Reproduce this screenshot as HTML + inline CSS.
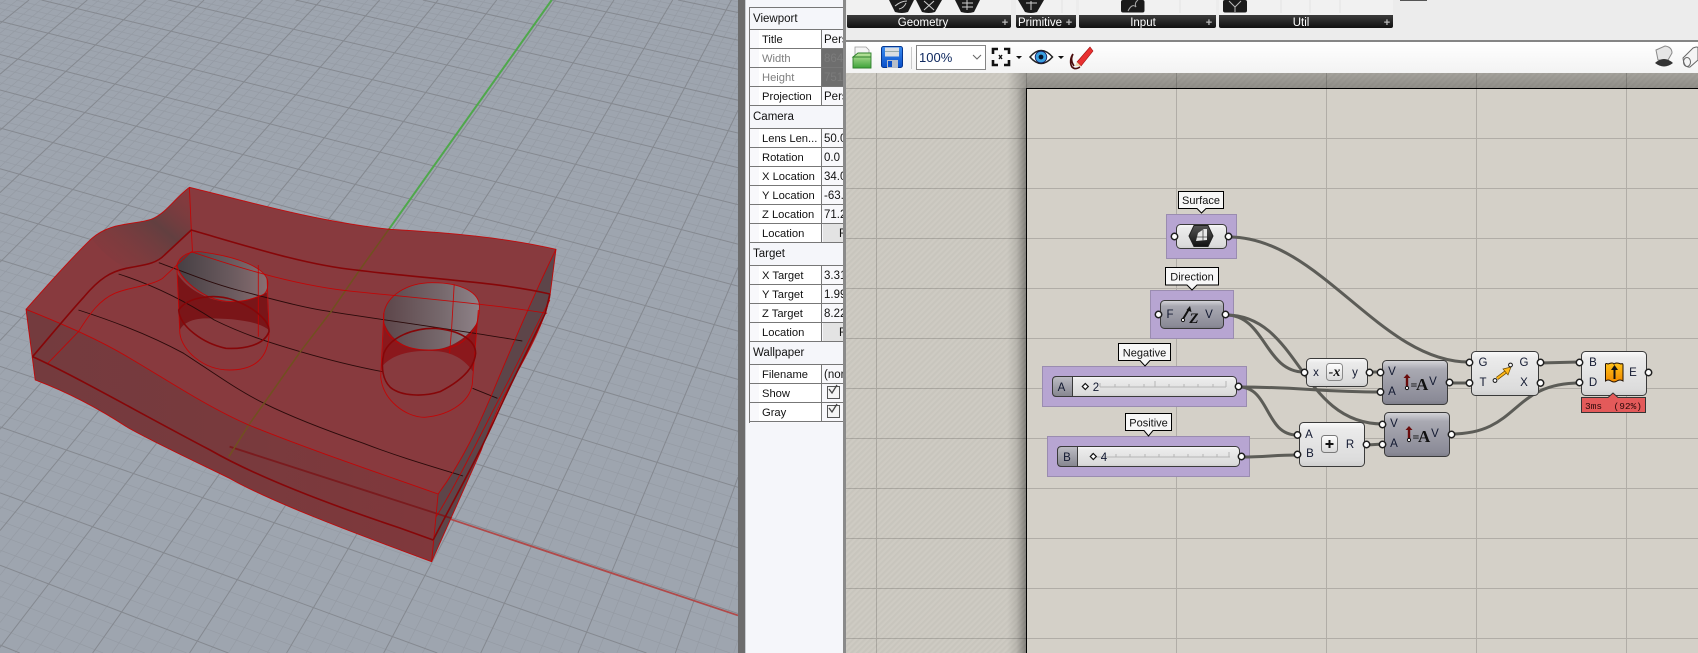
<!DOCTYPE html>
<html><head><meta charset="utf-8">
<style>
html,body{margin:0;padding:0;width:1698px;height:653px;overflow:hidden;background:#f5f6fa;font-family:"Liberation Sans",sans-serif}
svg{position:absolute;left:0;top:0}
#panel{position:absolute;left:746px;top:0;width:99px;height:653px;background:#f5f6fa;overflow:hidden}
#tbl{position:absolute;left:3px;top:7px;width:96px;height:415px;border-left:1px solid #777;border-top:1px solid #777;background:#f8f8fb;overflow:hidden}
.r{position:absolute;left:0;width:96px;box-sizing:border-box;border-bottom:1px solid #777;font-size:11.2px;line-height:20px;height:19px;color:#111;white-space:nowrap}
.r b{font-weight:normal;position:absolute;left:9px;top:0;height:18px;padding-left:3px;border-right:1px solid #777;background:#fff;width:59px;overflow:hidden}
.r i{font-style:normal;position:absolute;left:72px;top:0;padding-left:2px;width:30px;height:18px;overflow:hidden;font-size:11.5px}
.g{font-size:11.5px;line-height:22px;background:#f5f6fa;padding-left:3px}
.btn{background:#e3e3e3;left:73px!important;padding-left:16px!important;width:20px!important}
.cb{position:absolute;left:77px;top:2px;width:11px;height:11px;border:1px solid #555;background:#f4f4f4}
</style></head>
<body>
<svg width="738" height="653" viewBox="0 0 738 653">
<defs>
<linearGradient id="front" x1="0" y1="0" x2="1" y2="0"><stop offset="0" stop-color="#743b3e"/><stop offset=".5" stop-color="#783a3d"/><stop offset="1" stop-color="#80383c"/></linearGradient>
<linearGradient id="holeL" x1="0" y1="0" x2="1" y2="0"><stop offset="0" stop-color="#463f43"/><stop offset=".6" stop-color="#6a5a5e"/><stop offset="1" stop-color="#8a6f72"/></linearGradient>
<linearGradient id="holeR" x1="0" y1="0" x2="1" y2="0"><stop offset="0" stop-color="#5d464a"/><stop offset=".6" stop-color="#76686c"/><stop offset="1" stop-color="#8e8288"/></linearGradient>
<linearGradient id="slope" x1="0" y1="1" x2="1" y2="0"><stop offset="0" stop-color="#843a3e" stop-opacity="0"/><stop offset=".6" stop-color="#5e4040" stop-opacity=".9"/><stop offset="1" stop-color="#843a3e" stop-opacity=".2"/></linearGradient>
</defs>
<rect width="738" height="653" fill="#9ea5af"/>
<g id="grid"></g>
<line x1="551.7" y1="0" x2="389.6" y2="228.3" stroke="#4fa84b" stroke-width="2"/>
<line x1="451" y1="519.3" x2="738" y2="615.4" stroke="#b04a4a" stroke-width="1.8"/>
<g transform="translate(0,150) scale(.38265,.33333)" fill="none" stroke-linejoin="round">
<path fill="#883a3e" d="M68,478 C120,410 190,320 240,265 C290,215 350,225 395,208 C435,190 460,140 495,112 C650,155 830,215 1020,238 C1170,248 1320,262 1453,298 L1437,440 C1425,510 1380,610 1340,690 C1300,770 1270,860 1258,900 L1128,1235 C880,1130 700,1050 600,985 C520,940 390,870 330,830 C230,755 150,715 92,690 Z"/>
<path fill="url(#slope)" d="M240,265 C290,215 350,225 395,208 C435,190 460,140 495,112 L500,240 L430,315 C405,345 370,345 330,355 C290,330 260,300 240,265Z"/>
<path fill="url(#front)" d="M68,478 C180,530 260,570 340,625 C430,685 540,770 650,825 C800,895 980,965 1145,1032 L1128,1235 C880,1130 700,1050 600,985 C520,940 390,870 330,830 C230,755 150,715 92,690 Z"/>
<path fill="#5d4549" d="M1145,1032 C1210,930 1250,830 1290,720 C1330,610 1400,420 1453,298 L1437,440 C1425,510 1380,610 1340,690 C1300,770 1270,860 1258,900 L1128,1235 Z"/>
<!-- left hole -->
<path fill="url(#holeL)" d="M462,345 C470,315 500,298 540,308 C610,320 700,350 700,400 C700,425 690,435 680,437 C640,458 590,462 545,440 C510,420 470,385 462,345Z"/>
<path fill="#7a1518" d="M464,372 C490,420 550,455 600,456 C630,456 665,445 697,428 L703,540 C670,510 600,505 540,505 C510,505 480,515 470,540 Z"/>
<!-- right hole -->
<path fill="url(#holeR)" d="M1003,490 C1010,440 1060,398 1130,398 C1210,398 1253,430 1253,470 C1253,500 1245,525 1240,535 C1210,590 1170,600 1120,600 C1060,600 1010,570 1003,520Z"/>
<path fill="#8b181c" d="M1003,515 C1020,570 1060,600 1120,600 C1180,600 1225,560 1248,515 L1236,665 C1210,620 1170,603 1130,603 C1060,600 1020,620 998,650 Z"/>
<!-- hidden x axis -->
<path vector-effect="non-scaling-stroke" stroke="#7a1b1e" stroke-width="1.8" d="M600,890 L1180,1105"/>
<!-- black lines -->
<g stroke="#2a0a0a" stroke-width=".9">
<path vector-effect="non-scaling-stroke" d="M415,338 C480,365 540,395 620,420 C720,450 800,475 865,485 C1000,510 1200,540 1365,573"/>
<path vector-effect="non-scaling-stroke" d="M310,372 C400,405 480,450 560,510 C640,555 710,580 785,605 C860,630 930,650 1000,665"/>
<path vector-effect="non-scaling-stroke" d="M1235,715 L1300,745"/>
<path vector-effect="non-scaling-stroke" d="M205,480 C300,515 400,560 480,610 C560,670 620,720 690,760 C760,800 850,840 950,880 C1040,920 1130,950 1210,978"/>
</g>
<!-- seam -->
<path vector-effect="non-scaling-stroke" stroke="#70501f" stroke-width="1.5" d="M1018,235 L940,360 L865,485 L785,605 L690,760 L650,825 L598,920"/>
<!-- thin red -->
<g stroke="#c80000" stroke-width=".9" stroke-opacity=".9">
<path vector-effect="non-scaling-stroke" d="M68,478 C120,410 190,320 240,265 C290,215 350,225 395,208 C435,190 460,140 495,112 C650,155 830,215 1020,238 C1170,248 1320,262 1453,298 L1437,440 C1425,510 1380,610 1340,690 C1300,770 1270,860 1258,900 L1128,1235 C880,1130 700,1050 600,985 C520,940 390,870 330,830 C230,755 150,715 92,690 Z"/>
<path vector-effect="non-scaling-stroke" d="M68,478 C180,530 260,570 340,625 C430,685 540,770 650,825 C800,895 980,965 1145,1032 L1128,1235"/>
<path vector-effect="non-scaling-stroke" d="M1145,1032 C1210,930 1250,830 1290,720 C1330,610 1400,420 1453,298"/>
<path vector-effect="non-scaling-stroke" d="M125,640 L205,545 C235,490 260,450 300,430 C340,410 390,410 425,385 L500,305 C640,360 790,410 930,425 C1100,445 1300,465 1430,490"/>
<path vector-effect="non-scaling-stroke" d="M495,112 L500,240 L503,305"/>
<path vector-effect="non-scaling-stroke" d="M1140,1100 C1200,990 1270,820 1330,690 C1370,600 1400,530 1437,450"/>
<path vector-effect="non-scaling-stroke" d="M462,345 C470,315 500,298 540,308 C610,320 700,350 700,400 C700,425 690,435 680,437 C640,458 590,462 545,440 C510,420 470,385 462,345Z"/>
<path vector-effect="non-scaling-stroke" d="M462,345 L470,550 C475,600 530,660 600,660 C660,660 705,630 703,540 L698,385"/>
<path vector-effect="non-scaling-stroke" d="M675,345 L675,560"/>
<path vector-effect="non-scaling-stroke" d="M1003,490 C1010,440 1060,398 1130,398 C1210,398 1253,430 1253,470 C1253,500 1245,525 1240,535 C1210,590 1170,600 1120,600 C1060,600 1010,570 1003,520Z"/>
<path vector-effect="non-scaling-stroke" d="M1003,490 L995,680 C1000,750 1060,802 1110,802 C1180,795 1235,750 1235,690 L1250,480"/>
<path vector-effect="non-scaling-stroke" d="M1187,403 L1180,540 L1175,610"/>
</g>
<!-- thick dark red -->
<g stroke="#860608" stroke-width="1.6">
<path vector-effect="non-scaling-stroke" d="M85,620 C130,560 180,490 220,440 C260,385 290,365 330,355 C370,345 405,345 430,315 L500,240 C650,290 800,345 930,360 C1100,385 1300,395 1437,432"/>
<path vector-effect="non-scaling-stroke" d="M85,620 C200,680 350,780 549,900 C640,960 800,1040 1045,1134 L1132,1170"/>
<path vector-effect="non-scaling-stroke" d="M1437,432 L1425,490 C1400,550 1340,690 1300,790 C1250,920 1190,1040 1132,1170"/>
<path vector-effect="non-scaling-stroke" d="M467,480 C490,440 560,430 610,450 C660,470 705,510 703,545 C690,585 640,598 590,595 C530,580 470,530 467,480Z"/>
<path vector-effect="non-scaling-stroke" d="M1003,610 C1020,560 1080,535 1135,535 C1200,540 1243,570 1243,610 C1240,650 1210,690 1150,725 C1110,740 1050,740 1020,712 C1000,690 995,650 1003,610Z"/>
</g>
</g>
</svg>

<div style="position:absolute;left:738px;top:0;width:7px;height:653px;background:#6d6d6d"></div>
<div style="position:absolute;left:745px;top:0;width:1px;height:653px;background:#c8ccd0"></div>

<div id="panel">
<div id="tbl">
<div class="r g" style="top:0;height:22px">Viewport</div>
<div class="r" style="top:22px"><b>Title</b><i>Perspective</i></div>
<div class="r" style="top:41px"><b style="color:#7f7f7f">Width</b><i style="background:#6e6e6e;color:#7c7c7c">864</i></div>
<div class="r" style="top:60px"><b style="color:#7f7f7f">Height</b><i style="background:#6e6e6e;color:#7c7c7c">751</i></div>
<div class="r" style="top:79px"><b>Projection</b><i>Perspective</i></div>
<div class="r g" style="top:98px;height:23px">Camera</div>
<div class="r" style="top:121px"><b>Lens Len...</b><i>50.00</i></div>
<div class="r" style="top:140px"><b>Rotation</b><i>0.0</i></div>
<div class="r" style="top:159px"><b>X Location</b><i>34.06</i></div>
<div class="r" style="top:178px"><b>Y Location</b><i>-63.31</i></div>
<div class="r" style="top:197px"><b>Z Location</b><i>71.24</i></div>
<div class="r" style="top:216px"><b>Location</b><i class="btn">F</i></div>
<div class="r g" style="top:235px;height:23px;line-height:23px">Target</div>
<div class="r" style="top:258px"><b>X Target</b><i>3.311</i></div>
<div class="r" style="top:277px"><b>Y Target</b><i>1.997</i></div>
<div class="r" style="top:296px"><b>Z Target</b><i>8.221</i></div>
<div class="r" style="top:315px"><b>Location</b><i class="btn">F</i></div>
<div class="r g" style="top:334px;height:23px;line-height:23px">Wallpaper</div>
<div class="r" style="top:357px"><b>Filename</b><i>(none)</i></div>
<div class="r" style="top:376px"><b>Show</b><i></i><span class="cb"></span></div>
<div class="r" style="top:395px"><b>Gray</b><i></i><span class="cb"></span></div>
</div>
<svg width="99" height="653" viewBox="746 0 99 653" style="pointer-events:none">
<path d="M829,371 L832,375 L837,367" fill="none" stroke="#444" stroke-width="1.3" transform="translate(0,18)"/>
<path d="M829,371 L832,375 L837,367" fill="none" stroke="#444" stroke-width="1.3" transform="translate(0,37)"/>
</svg>
</div>

<svg width="1698" height="653" viewBox="0 0 1698 653">
<defs>
<pattern id="hatch" width="4.2" height="4.2" patternUnits="userSpaceOnUse" patternTransform="rotate(45)"><rect width="4.2" height="4.2" fill="#cecbc3"/><rect width="2.1" height="4.2" fill="#c8c5bd"/></pattern>
<linearGradient id="shL" x1="0" x2="1" y1="0" y2="0"><stop offset="0" stop-color="#000" stop-opacity="0"/><stop offset=".5" stop-color="#000" stop-opacity=".1"/><stop offset="1" stop-color="#000" stop-opacity=".36"/></linearGradient>
<linearGradient id="shT" x1="0" x2="0" y1="0" y2="1"><stop offset="0" stop-color="#000" stop-opacity=".2"/><stop offset="1" stop-color="#000" stop-opacity=".3"/></linearGradient>
<linearGradient id="shC" x1="0" x2="1" y1="0" y2="0"><stop offset="0" stop-color="#000" stop-opacity="0"/><stop offset="1" stop-color="#000" stop-opacity=".25"/></linearGradient>
<linearGradient id="tb" x1="0" x2="0" y1="0" y2="1"><stop offset="0" stop-color="#fff"/><stop offset="1" stop-color="#f3f3f3"/></linearGradient>
<linearGradient id="lbl" x1="0" x2="0" y1="0" y2="1"><stop offset="0" stop-color="#3c3c3c"/><stop offset="1" stop-color="#111"/></linearGradient>
<linearGradient id="lt" x1="0" x2="0" y1="0" y2="1"><stop offset="0" stop-color="#fafafa"/><stop offset=".15" stop-color="#ebebeb"/><stop offset=".85" stop-color="#dcdcdc"/><stop offset="1" stop-color="#cfcfcf"/></linearGradient>
<linearGradient id="dk" x1="0" x2="0" y1="0" y2="1"><stop offset="0" stop-color="#d6d6da"/><stop offset=".2" stop-color="#a9a9b2"/><stop offset=".9" stop-color="#8b8b97"/><stop offset="1" stop-color="#7e7e8a"/></linearGradient>
<linearGradient id="ab" x1="0" x2="0" y1="0" y2="1"><stop offset="0" stop-color="#bdbdc4"/><stop offset="1" stop-color="#85858f"/></linearGradient>
<linearGradient id="btnb" x1="0" x2="0" y1="0" y2="1"><stop offset="0" stop-color="#fff"/><stop offset="1" stop-color="#d8d8d8"/></linearGradient>
<linearGradient id="gr" x1="0" x2="0" y1="0" y2="1"><stop offset="0" stop-color="#bfe6a0"/><stop offset="1" stop-color="#3fa33a"/></linearGradient>
<linearGradient id="bl" x1="0" x2="0" y1="0" y2="1"><stop offset="0" stop-color="#3a8cf0"/><stop offset="1" stop-color="#0a4fc8"/></linearGradient>
<linearGradient id="or" x1="0" x2="0" y1="0" y2="1"><stop offset="0" stop-color="#ffc21a"/><stop offset="1" stop-color="#f08a00"/></linearGradient>
<linearGradient id="hexg" x1="0" x2="0" y1="0" y2="1"><stop offset="0" stop-color="#555"/><stop offset="1" stop-color="#111"/></linearGradient>
</defs>

<!-- canvas -->
<rect x="845" y="73" width="853" height="580" fill="url(#hatch)"/>
<rect x="1027" y="89" width="671" height="564" fill="#d4d0c8"/>
<rect x="1007" y="89" width="19" height="564" fill="url(#shL)"/>
<rect x="1026" y="73" width="672" height="15" fill="url(#shT)"/>
<rect x="1007" y="73" width="19" height="16" fill="url(#shC)"/>
<g fill="#000" opacity=".16">
<rect x="876" y="73" width="1" height="580"/><rect x="1026" y="73" width="1" height="580"/><rect x="1176" y="73" width="1" height="580"/><rect x="1326" y="73" width="1" height="580"/><rect x="1476" y="73" width="1" height="580"/><rect x="1626" y="73" width="1" height="580"/>
<rect x="845" y="88" width="853" height="1"/><rect x="845" y="138" width="853" height="1"/><rect x="845" y="188" width="853" height="1"/><rect x="845" y="238" width="853" height="1"/><rect x="845" y="288" width="853" height="1"/><rect x="845" y="338" width="853" height="1"/><rect x="845" y="388" width="853" height="1"/><rect x="845" y="438" width="853" height="1"/><rect x="845" y="488" width="853" height="1"/><rect x="845" y="538" width="853" height="1"/><rect x="845" y="588" width="853" height="1"/><rect x="845" y="638" width="853" height="1"/>
</g>
<rect x="1026" y="88" width="672" height="1" fill="#000"/><rect x="1026" y="88" width="1" height="565" fill="#000"/>

<!-- window left edge -->
<rect x="843" y="0" width="3" height="653" fill="#8a8a8a"/>

<!-- ribbon -->
<rect x="846" y="0" width="852" height="41" fill="#ececec"/>
<rect x="846" y="40" width="852" height="2" fill="#858585"/>
<rect x="1400" y="0" width="27" height="1" fill="#555"/>
<g>
<path d="M847,0 H1011 V26 q0,2 -2,2 H849 q-2,0 -2,-2Z" fill="#f1f1f1"/>
<path d="M1016,0 H1076 V26 q0,2 -2,2 H1018 q-2,0 -2,-2Z" fill="#f1f1f1"/>
<path d="M1079,0 H1216 V26 q0,2 -2,2 H1081 q-2,0 -2,-2Z" fill="#f1f1f1"/>
<path d="M1219,0 H1393 V26 q0,2 -2,2 H1221 q-2,0 -2,-2Z" fill="#f1f1f1"/>
<path d="M847,15 H1011 V26 q0,2 -2,2 H849 q-2,0 -2,-2Z" fill="url(#lbl)"/>
<path d="M1016,15 H1076 V26 q0,2 -2,2 H1018 q-2,0 -2,-2Z" fill="url(#lbl)"/>
<path d="M1079,15 H1216 V26 q0,2 -2,2 H1081 q-2,0 -2,-2Z" fill="url(#lbl)"/>
<path d="M1219,15 H1393 V26 q0,2 -2,2 H1221 q-2,0 -2,-2Z" fill="url(#lbl)"/>
<g fill="#fff" font-size="11.5" text-anchor="middle" font-family="'Liberation Sans',sans-serif">
<text x="923" y="26">Geometry</text><text x="1040" y="26">Primitive</text><text x="1143" y="26">Input</text><text x="1301" y="26">Util</text>
</g>
<g fill="#bbb" font-size="11" font-weight="bold" text-anchor="middle" font-family="'Liberation Sans',sans-serif">
<text x="1005" y="26">+</text><text x="1069" y="26">+</text><text x="1209" y="26">+</text><text x="1387" y="26">+</text>
</g>
<g fill="#1b1b1b">
<path d="M889,0 H914 L908,12 Q902,14 895,12Z"/><path d="M916,0 H942 L935,12 Q929,14 922,12Z"/><path d="M955,0 H980 L974,12 Q968,14 961,12Z"/><path d="M1018,0 H1044 L1037,12 Q1031,14 1025,12Z"/>
<rect x="1121" y="0" width="23.5" height="12.5" rx="2"/><rect x="1223" y="0" width="24" height="12.5" rx="2"/>
</g>
<g stroke="#cfcfcf" fill="none" stroke-width="1">
<path d="M895,6 q6,-5 12,-5 M899,9 q5,-1 7,-6"/><path d="M924,1 l10,9 M934,1 l-10,9"/><path d="M962,3 h11 M962,7 h11 M967,0 v10"/><path d="M1026,3 h11 M1031,1 v9"/>
<path d="M1128,11 q4,-8 8,-4 q-2,-4 2,-7" stroke="#aaa"/><path d="M1229,1 l6,6 l6,-6 M1235,7 v5" stroke="#bbb"/>
</g>
<g stroke="#e2e2e2"><line x1="1062" y1="0" x2="1062" y2="13" stroke="#e4e4e4"/><line x1="1180" y1="0" x2="1180" y2="13"/><line x1="1281" y1="0" x2="1281" y2="13"/><line x1="1310" y1="0" x2="1310" y2="13"/><line x1="1340" y1="0" x2="1340" y2="13"/></g>
</g>

<!-- toolbar -->
<rect x="846" y="42" width="852" height="31" fill="url(#tb)"/>
<!-- folder -->
<path d="M855,60 V47 H866 L869,50 V60Z" fill="#f4f4f4" stroke="#999" stroke-width=".8"/>
<path d="M853,57 H871 V68 H853Z M853,57 L858,53 H871 V57Z" fill="url(#gr)" stroke="#2d7f2a" stroke-width=".9"/>
<!-- save -->
<rect x="881.5" y="46.5" width="21" height="21" rx="2" fill="url(#bl)" stroke="#06368f"/>
<rect x="885" y="47.5" width="14" height="9" fill="#d9dde2"/><rect x="885" y="51" width="14" height="1" fill="#9aa"/>
<rect x="887" y="60" width="11" height="8" fill="#b8bec8"/><rect x="888" y="61" width="4" height="6" fill="#0a4fc8"/>
<rect x="911" y="47" width="1" height="22" fill="#c9c9c9"/>
<!-- dropdown -->
<rect x="916.5" y="45.5" width="69" height="24" fill="#fff" stroke="#858585"/>
<text x="919" y="62" font-size="13" fill="#102a60" font-family="'Liberation Sans',sans-serif">100%</text>
<path d="M973,55 l4,4 l4,-4" fill="none" stroke="#666" stroke-width="1"/>
<!-- zoom extents -->
<g fill="none" stroke="#111" stroke-width="2.6"><path d="M993,54 V49 H998 M1004,49 H1009 V54 M1009,60 V65 H1004 M998,65 H993 V60"/></g>
<path d="M999,55 l3,4 M1002,55 l-3,4" stroke="#111" stroke-width="1.4"/>
<path d="M1016,56 h6 l-3,3Z M1058,56 h6 l-3,3Z" fill="#111"/>
<!-- eye -->
<path d="M1030,57 Q1041,44 1052.5,57 Q1041,70 1030,57Z" fill="#fff" stroke="#222" stroke-width="1.5"/>
<circle cx="1041" cy="57" r="5.8" fill="#3aa0e0" stroke="#115" stroke-width=".8"/><circle cx="1041" cy="57" r="2.4" fill="#06122a"/>
<!-- sketch pen -->
<path d="M1077,62 L1090,47 L1093,51 L1081,66Z" fill="#e83030" stroke="#a01010" stroke-width=".6"/>
<path d="M1077,62 L1081,66 L1075,66Z" fill="#f0d8b0"/>
<path d="M1074,66 C1070,60 1072,56 1073,54 C1070,58 1070,64 1072,67 C1075,70 1078,68 1080,67" fill="none" stroke="#4a0d0d" stroke-width="1.6"/>
<!-- right icons -->
<g>
<path d="M1656,50 L1665,46 Q1672,47 1672,53 L1668,60 H1658Z" fill="#e6e6e6" stroke="#8a8a8a"/>
<path d="M1655,63 Q1664,55 1673,63 Q1664,70 1655,63Z" fill="#333"/>
<path d="M1683,58 L1693,48 Q1698,46 1698,48 V60 L1690,67 Q1684,68 1683,58Z" fill="#f4f4f4" stroke="#666"/>
<ellipse cx="1687" cy="62" rx="3.5" ry="4.5" fill="none" stroke="#666"/>
</g>

<!-- groups -->
<g fill="#b7a5d2" stroke="#9a8cb0">
<rect x="1166.5" y="214.5" width="70" height="44"/>
<rect x="1150.5" y="290.5" width="83" height="48"/>
<rect x="1042.5" y="366.5" width="204" height="40"/>
<rect x="1047.5" y="436.5" width="202" height="40"/>
</g>

<!-- wires -->
<g fill="none" stroke="#5c5c57" stroke-width="3" stroke-linecap="round">
<path d="M1229,237 C1320,237 1380,362 1469,362"/>
<path d="M1226,315 C1265,315 1265,372 1304,372"/>
<path d="M1226,315 C1300,315 1300,424 1383,424"/>
<path d="M1239,387 C1300,387 1320,392 1381,392"/>
<path d="M1239,387 C1270,387 1265,435 1297,435"/>
<path d="M1242,457 C1265,457 1275,455 1297,455"/>
<path d="M1369,372 L1381,372"/>
<path d="M1367,445 L1383,444"/>
<path d="M1449,383 L1469,383"/>
<path d="M1540,363 L1579,362"/>
<path d="M1451,434 C1520,434 1510,383 1580,383"/>
</g>

<!-- tooltips -->
<g font-family="'Liberation Sans',sans-serif" font-size="11" fill="#111" text-anchor="middle">
<path d="M1178.5,191.5 H1223.5 V208.5 H1206 L1201.5,213 L1197,208.5 H1178.5Z" fill="#f7f7f7" stroke="#000"/><text x="1201" y="204">Surface</text>
<path d="M1165.5,267.5 H1218.5 V285 H1197 L1192,290 L1187,285 H1165.5Z" fill="#f7f7f7" stroke="#000"/><text x="1192" y="280.5">Direction</text>
<path d="M1118.5,343.5 H1170.5 V360.5 H1150 L1145,366 L1140,360.5 H1118.5Z" fill="#f7f7f7" stroke="#000"/><text x="1144.5" y="356.5">Negative</text>
<path d="M1125.5,413.5 H1171.5 V430.5 H1153 L1148.5,436 L1144,430.5 H1125.5Z" fill="#f7f7f7" stroke="#000"/><text x="1148.5" y="426.5">Positive</text>
</g>

<!-- nodes -->
<g stroke="#3a3a3a" stroke-width="1">
<rect x="1176.5" y="224.5" width="50" height="24" rx="4" fill="url(#lt)"/>
<rect x="1160.5" y="300.5" width="63" height="28" rx="4" fill="url(#dk)"/>
<rect x="1052.5" y="376.5" width="184" height="20" rx="4" fill="url(#lt)"/>
<rect x="1057.5" y="446.5" width="182" height="20" rx="4" fill="url(#lt)"/>
<path d="M1072.5,376.5 H1056.5 q-4,0 -4,4 V392.5 q0,4 4,4 H1072.5Z" fill="url(#ab)"/>
<path d="M1077.5,446.5 H1061.5 q-4,0 -4,4 V462.5 q0,4 4,4 H1077.5Z" fill="url(#ab)"/>
<rect x="1299.5" y="422.5" width="65" height="44" rx="4" fill="url(#lt)"/>
<rect x="1306.5" y="358.5" width="61" height="28" rx="4" fill="url(#lt)"/>
<rect x="1382.5" y="360.5" width="65" height="44" rx="4" fill="url(#dk)"/>
<rect x="1384.5" y="412.5" width="65" height="44" rx="4" fill="url(#dk)"/>
<rect x="1471.5" y="351.5" width="67" height="44" rx="4" fill="url(#lt)"/>
<rect x="1581.5" y="351.5" width="65" height="44" rx="4" fill="url(#lt)"/>
</g>

<!-- slider ticks -->
<g stroke="#b5b5b5" stroke-width="1" fill="none">
<path d="M1100,387 H1226 M1100,383 V387 M1115,384 V387 M1129,384 V387 M1144,384 V387 M1155,381 V387 M1169,384 V387 M1184,384 V387 M1198,384 V387 M1213,384 V387 M1226,381 V387"/>
<path d="M1092,457 H1230 M1092,453 V457 M1116,454 V457 M1130,454 V457 M1145,454 V457 M1159,454 V457 M1174,454 V457 M1188,454 V457 M1203,454 V457 M1217,454 V457 M1229,452 V457"/>
</g>

<!-- ports -->
<g fill="#fff" stroke="#1e1e1e" stroke-width="1.5">
<circle cx="1174.5" cy="236.5" r="3.2"/><circle cx="1228.5" cy="236.5" r="3.2"/>
<circle cx="1158.5" cy="314.5" r="3.2"/><circle cx="1225.5" cy="314.5" r="3.2"/>
<circle cx="1238.5" cy="386.5" r="3.2"/><circle cx="1241.5" cy="456.5" r="3.2"/>
<circle cx="1297.5" cy="435" r="3.2"/><circle cx="1297.5" cy="454.5" r="3.2"/><circle cx="1366.5" cy="444.5" r="3.2"/>
<circle cx="1304.5" cy="372.5" r="3.2"/><circle cx="1369.5" cy="372.5" r="3.2"/>
<circle cx="1380.5" cy="372.5" r="3.2"/><circle cx="1380.5" cy="392" r="3.2"/><circle cx="1449.5" cy="382.5" r="3.2"/>
<circle cx="1382.5" cy="424.5" r="3.2"/><circle cx="1382.5" cy="444.5" r="3.2"/><circle cx="1451.5" cy="434.5" r="3.2"/>
<circle cx="1469.5" cy="362.5" r="3.2"/><circle cx="1469.5" cy="383" r="3.2"/><circle cx="1540.5" cy="362.5" r="3.2"/><circle cx="1540.5" cy="383" r="3.2"/>
<circle cx="1579.5" cy="362.5" r="3.2"/><circle cx="1579.5" cy="382.5" r="3.2"/><circle cx="1648.5" cy="372.5" r="3.2"/>
</g>

<!-- node text -->
<g font-family="'Liberation Sans',sans-serif" font-size="11.5" fill="#111830" text-anchor="middle">
<text x="1170" y="318">F</text><text x="1209" y="318">V</text>
<text x="1061.5" y="391">A</text><text x="1067" y="461">B</text>
<text x="1096" y="391">2</text><text x="1104" y="461">4</text>
<text x="1309" y="438">A</text><text x="1310" y="457">B</text><text x="1350" y="448">R</text>
<text x="1316" y="376">x</text><text x="1355" y="376">y</text>
<text x="1392" y="375">V</text><text x="1392" y="395">A</text><text x="1433" y="385">V</text>
<text x="1394" y="427">V</text><text x="1394" y="447">A</text><text x="1435" y="437">V</text>
<text x="1483" y="366">G</text><text x="1483" y="386">T</text><text x="1524" y="366">G</text><text x="1524" y="386">X</text>
<text x="1593" y="366">B</text><text x="1593" y="386">D</text><text x="1633" y="376">E</text>
</g>
<!-- slider diamonds -->
<g fill="#fff" stroke="#111" stroke-width="1.2">
<path d="M1085.3,383.5 l3,3 l-3,3 l-3,-3Z"/><path d="M1093.3,453.5 l3,3 l-3,3 l-3,-3Z"/>
</g>
<!-- surface icon -->
<path d="M1194,225.5 H1208 L1213,236 L1208,246.5 H1194 L1189,236Z" fill="url(#hexg)" stroke="#222"/>
<path d="M1198,233 L1204,229 H1207 V240 L1196,241 Z" fill="#e6e6e6"/><path d="M1203,230 V241 M1197,237 H1207" stroke="#444" stroke-width=".8"/>
<!-- direction icon -->
<path d="M1183,319 L1189,309" stroke="#111" stroke-width="2"/><path d="M1190,306 L1191.5,312 L1186.5,310Z" fill="#111"/>
<circle cx="1183" cy="320" r="1.6" fill="#fff" stroke="#111"/>
<text x="1194" y="323" font-family="'Liberation Serif',serif" font-size="15" font-weight="bold" fill="#111" text-anchor="middle" font-style="italic">Z</text>
<!-- negate button -->
<rect x="1326.5" y="363.5" width="16" height="17" rx="3" fill="url(#btnb)" stroke="#8a8a8a"/>
<text x="1334.5" y="376" font-family="'Liberation Serif',serif" font-size="14" font-weight="bold" font-style="italic" fill="#111" text-anchor="middle">-x</text>
<!-- add button -->
<rect x="1321.5" y="435.5" width="16" height="17" rx="3" fill="url(#btnb)" stroke="#7a7a7a"/>
<path d="M1329.5,440 V448 M1325.5,444 H1333.5" stroke="#111" stroke-width="2"/>
<!-- amp icons -->
<g>
<path d="M1407,387 V377" stroke="#6a0d0d" stroke-width="2.4"/><path d="M1403.5,378 L1407,374 L1410.5,378Z" fill="#6a0d0d"/>
<circle cx="1407" cy="388" r="1.6" fill="#fff" stroke="#111"/>
<text x="1410.5" y="389" font-family="'Liberation Serif',serif" font-size="12" font-weight="bold" fill="#111">=</text>
<text x="1416" y="390" font-family="'Liberation Serif',serif" font-size="17" font-weight="bold" fill="#111">A</text>
<path d="M1409,439 V429" stroke="#6a0d0d" stroke-width="2.4"/><path d="M1405.5,430 L1409,426 L1412.5,430Z" fill="#6a0d0d"/>
<circle cx="1409" cy="440" r="1.6" fill="#fff" stroke="#111"/>
<text x="1412.5" y="441" font-family="'Liberation Serif',serif" font-size="12" font-weight="bold" fill="#111">=</text>
<text x="1418" y="442" font-family="'Liberation Serif',serif" font-size="17" font-weight="bold" fill="#111">A</text>
</g>
<!-- move icon -->
<path d="M1497,378.5 L1507,371" stroke="#6b4a00" stroke-width="3.4"/><path d="M1497,378.5 L1507,371" stroke="#ffb81a" stroke-width="2"/>
<path d="M1511,367 L1508,375 L1503,369Z" fill="#ffb81a" stroke="#6b4a00" stroke-width=".7"/>
<circle cx="1495" cy="380.5" r="1.9" fill="#fff" stroke="#111"/><circle cx="1510.5" cy="365" r="1.9" fill="#fff" stroke="#111"/>
<!-- extrude icon -->
<path d="M1605.5,364 Q1606,363 1608,364 Q1613,362 1614,364 Q1616,362 1621,364 Q1623,363 1623,365 V381 Q1620,379 1617,381 Q1614,383 1611,381 Q1608,379 1605.5,381Z" fill="url(#or)" stroke="#221100"/>
<path d="M1614.5,379 V368" stroke="#111" stroke-width="2"/><path d="M1611,370 L1614.5,365 L1618,370Z" fill="#111"/>
<!-- badge -->
<path d="M1581.5,397.5 H1608 L1613,393 L1618,397.5 H1645.5 V412.5 H1581.5Z" fill="#e35a5a" stroke="#333"/>
<text x="1585" y="409" font-family="'Liberation Mono',monospace" font-size="9.5" fill="#2a0808" xml:space="preserve">3ms  (92%)</text>
</svg>

<script>
(function(){
var g=document.getElementById('grid'),ns='http://www.w3.org/2000/svg';
var VA=[1264,-1000],VB=[-4000,-973],W=738,H=653;
function R(u){var t=1/4238-u*3.82e-6,x=1/t-4000;return [x,520+.3352*(x-453.3)];}
function G(v){var t=1/1445+v*2.367e-5,y=1/t-1000;return [551.7-.7122*y,y];}
function add(x1,y1,x2,y2,c,w){
 var dx=x2-x1,dy=y2-y1,t0=0,t1=1,ps=[-dx,dx,-dy,dy],qs=[x1,W-x1,y1,H-y1];
 for(var n=0;n<4;n++){
  if(ps[n]===0){if(qs[n]<0)return;continue;}
  var r=qs[n]/ps[n];
  if(ps[n]<0){if(r>t1)return;if(r>t0)t0=r;}else{if(r<t0)return;if(r<t1)t1=r;}
 }
 var l=document.createElementNS(ns,'line');
 l.setAttribute('x1',(x1+t0*dx).toFixed(1));l.setAttribute('y1',(y1+t0*dy).toFixed(1));
 l.setAttribute('x2',(x1+t1*dx).toFixed(1));l.setAttribute('y2',(y1+t1*dy).toFixed(1));
 l.setAttribute('stroke',c);l.setAttribute('stroke-width',w);g.appendChild(l);
}
var pass,i;
for(pass=0;pass<2;pass++){
 for(i=-125;i<=125;i++){
  var maj=(i%5===0);if((pass===1)!==maj)continue;
  var c=maj?'#858990':'#959ba4',w=maj?1:.7,p=R(i/5);
  var k=(720-VA[1])/(p[1]-VA[1]);
  add(VA[0],VA[1],VA[0]+(p[0]-VA[0])*k,720,c,w);
 }
 for(i=-40;i<=130;i++){
  var maj2=(i%5===0);if((pass===1)!==maj2)continue;
  var c2=maj2?'#858990':'#959ba4',w2=maj2?1:.7,q=G(i/5);
  var k2=(800-VB[0])/(q[0]-VB[0]);
  add(VB[0],VB[1],800,VB[1]+(q[1]-VB[1])*k2,c2,w2);
 }
}
})();
</script>
</body></html>
